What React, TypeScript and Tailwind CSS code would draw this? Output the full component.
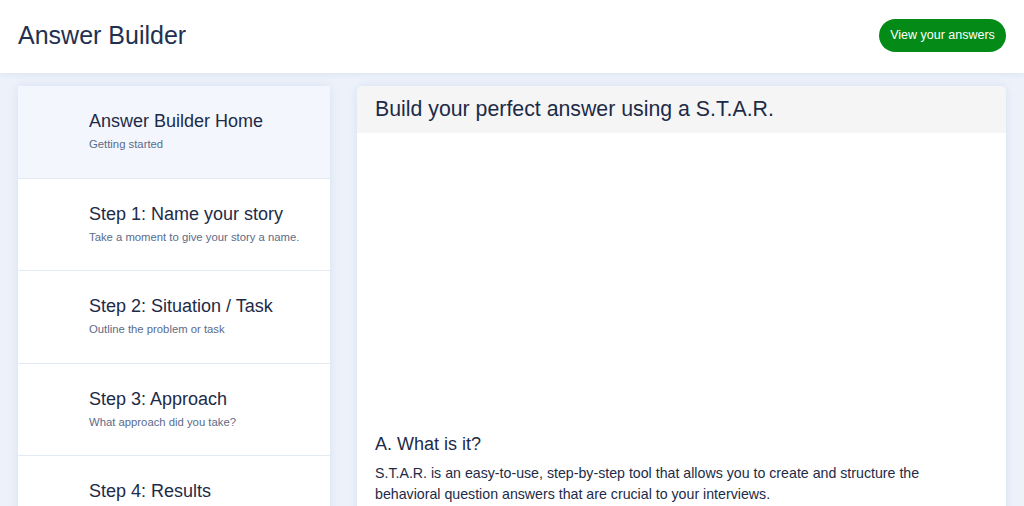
import React from "react";

const steps = [
  { title: "Answer Builder Home", sub: "Getting started", active: true },
  { title: "Step 1: Name your story", sub: "Take a moment to give your story a name." },
  { title: "Step 2: Situation / Task", sub: "Outline the problem or task" },
  { title: "Step 3: Approach", sub: "What approach did you take?" },
  { title: "Step 4: Results", sub: "What were the results?" },
];

export default function App() {
  return (
    <div className="h-[506px] w-[1024px] overflow-hidden bg-[#edf2fa] font-['Liberation_Sans',Arial,sans-serif] text-[#1d2b48]">
      <header className="flex h-[73px] items-center justify-between bg-white px-[18px] pb-[2px] shadow-[0_1px_6px_rgba(180,195,220,0.35)]">
        <h1 className="text-[25px] font-light text-[#1f3150]">Answer Builder</h1>
        <button className="h-[33px] w-[127px] rounded-full bg-[#038a17] text-[12.5px] text-white">
          View your answers
        </button>
      </header>
      <div className="flex gap-[27px] px-[18px] pt-[13px]">
        <nav className="w-[312px] shrink-0 bg-white shadow-[0_0_10px_rgba(190,205,230,0.45)]">
          {steps.map((s, i) => (
            <div
              key={i}
              className={`h-[92.5px] border-b border-[#e3eaf4] pl-[71px] pt-[24px] ${s.active ? "bg-[#f3f7fd]" : "bg-white"}`}
            >
              <div className="text-[18px] leading-[22px] text-[#1d2b48]">{s.title}</div>
              <div className="mt-[5px] text-[11.3px] leading-[14px] text-[#5b6b8a]">{s.sub}</div>
            </div>
          ))}
        </nav>
        <main className="w-[649px] shrink-0 overflow-hidden rounded-t-[6px] bg-white shadow-[0_0_10px_rgba(190,205,230,0.45)]">
          <div className="flex h-[47px] items-center bg-[#f5f5f5] px-[18px]">
            <h2 className="text-[21.3px] text-[#1d2b48]">Build your perfect answer using a S.T.A.R.</h2>
          </div>
          <div className="px-[18px]">
            <div className="h-[300px]" />
            <h3 className="text-[18px] leading-[22px]">A. What is it?</h3>
            <p className="mt-[8px] max-w-[580px] text-[14.2px] leading-[21px] text-[#1d2b48]">
              S.T.A.R. is an easy-to-use, step-by-step tool that allows you to create and structure the behavioral question answers that are crucial to your interviews.
            </p>
          </div>
        </main>
      </div>
    </div>
  );
}
